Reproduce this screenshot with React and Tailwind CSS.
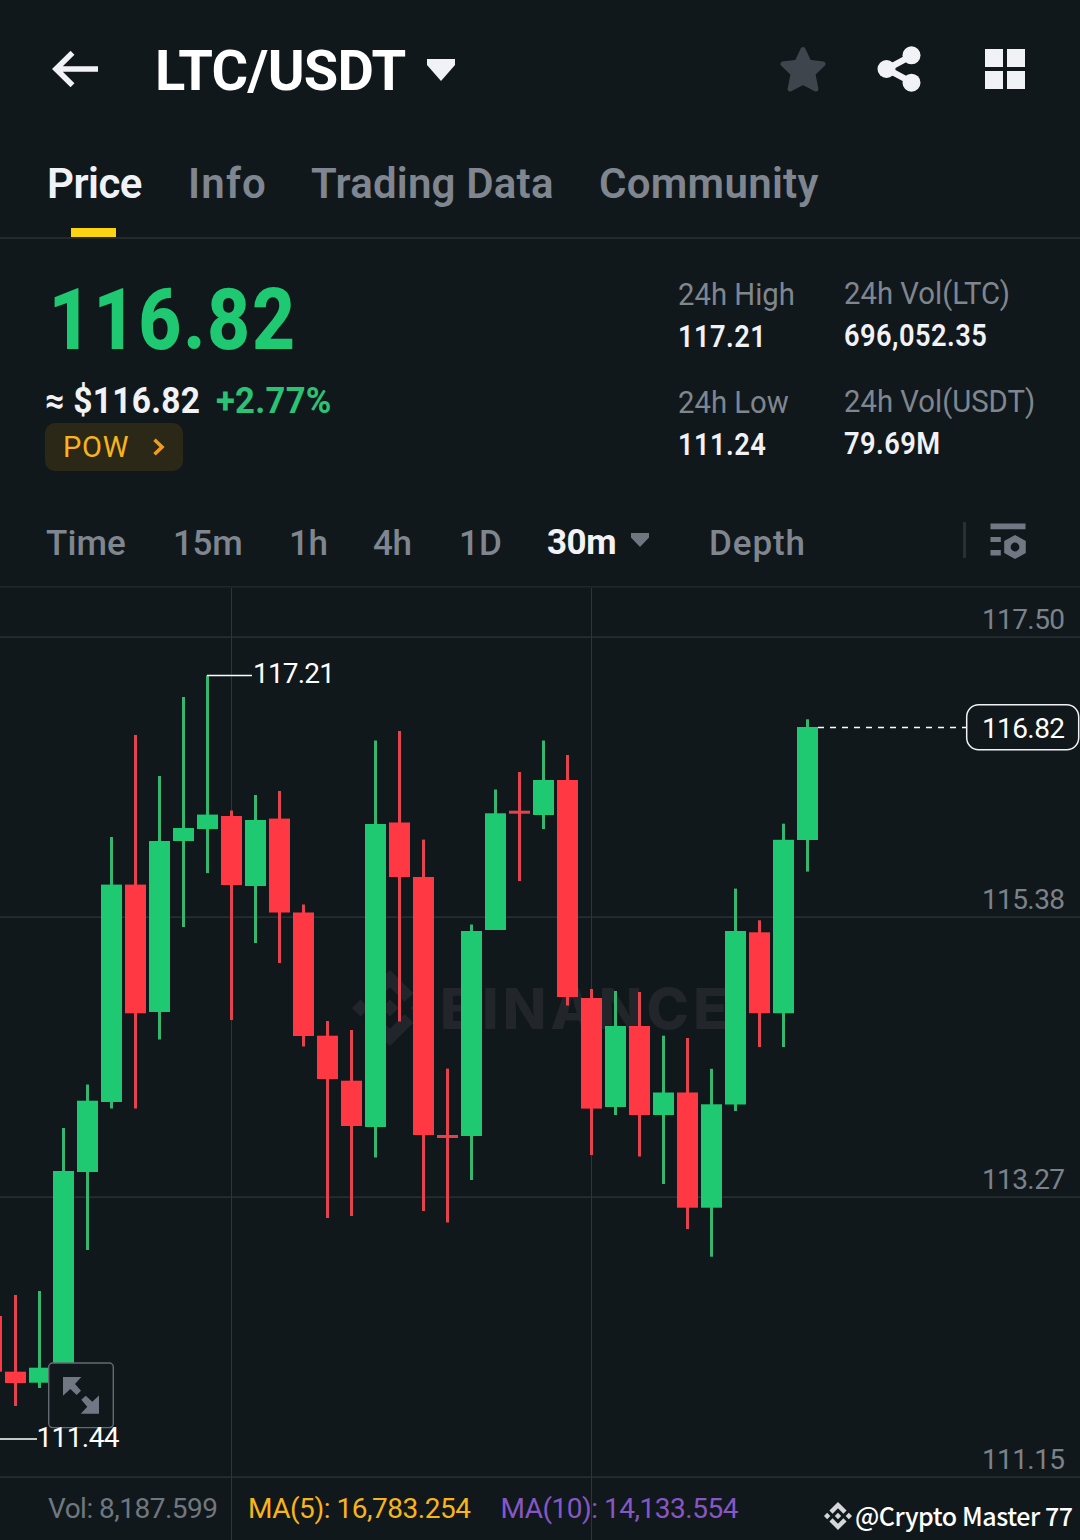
import React from 'react';
import { SiBinance } from 'react-icons/si';

const GREEN = '#1ec971';
const RED = '#ff3844';
const GREEN_WICK = '#35b56f';
const RED_WICK = '#e3434f';

// [high, body top, body bottom, low, up?]
const candles = [
  [1316, 1316, 1371.7, 1371.7, 0],
  [1295, 1371.7, 1383, 1406, 0],
  [1291, 1367.7, 1382.7, 1388, 1],
  [1128, 1171, 1390, 1390, 1],
  [1084.5, 1100.7, 1172, 1250, 1],
  [837, 884.6, 1102, 1108.5, 1],
  [735, 884.6, 1013.3, 1108.5, 0],
  [776, 841, 1012, 1039.5, 1],
  [697, 828, 841, 927, 1],
  [675.5, 814.6, 829, 873, 1],
  [810.5, 816, 885, 1020, 0],
  [795, 820, 886, 943, 1],
  [791, 818.6, 912.5, 963, 0],
  [904.5, 912.5, 1036, 1046.5, 0],
  [1021, 1035.7, 1079, 1218, 0],
  [1030, 1080.7, 1126, 1216, 0],
  [740.5, 824, 1127, 1157.5, 1],
  [731, 822.5, 877, 1021.5, 0],
  [839.6, 877, 1135, 1211, 0],
  [1068.6, 1135, 1138, 1222.5, 0],
  [924.5, 931, 1136, 1180, 1],
  [789.5, 813.3, 930, 930, 1],
  [772, 810.7, 813.7, 881, 0],
  [740.5, 780, 815, 829, 1],
  [755, 780, 997, 1005.5, 0],
  [989, 998, 1108.6, 1155, 0],
  [991, 1026, 1107, 1115, 1],
  [992, 1026, 1115, 1156.5, 0],
  [1035.7, 1092.5, 1115, 1184, 1],
  [1038, 1092.5, 1207.7, 1229, 0],
  [1068.8, 1104.3, 1207.7, 1256.7, 1],
  [888.6, 931, 1104.5, 1111, 1],
  [920.3, 932.3, 1013.2, 1047, 0],
  [823.7, 839.8, 1013.2, 1047, 1],
  [719.3, 727, 840, 871.6, 1],
];

const gridLines = [
  { y: 637, label: '117.50' },
  { y: 917, label: '115.38' },
  { y: 1197, label: '113.27' },
  { y: 1477, label: '111.15' },
];

const Header = () => (
  <header className="flex items-center h-[140px] pt-0.5 pl-[52px] pr-[55px]">
    <svg className="w-[46px] h-[36px] -mt-1" viewBox="0 0 46 36" fill="none" stroke="#f1f2f6" strokeWidth="5.6">
      <path d="M3 18H46M20.5 1.8L4 18l16.500 16.200" />
    </svg>
    <h1 className="ml-[57px] w-[272px] text-[56px] leading-[70px] font-bold tracking-[-0.7px] text-white whitespace-nowrap">
      LTC/USDT
    </h1>
    <svg className="w-7 h-[22px] -mt-0.5" viewBox="0 0 28 22" fill="#f1f2f6">
      <path d="M0 0H28V6L14 22 0 6z" />
    </svg>
    <div className="flex items-center ml-auto -mt-1">
      <svg className="w-[46px] h-[46px]" viewBox="0 0 46 46" fill="#3f454c" stroke="#3f454c" strokeWidth="5" strokeLinejoin="round">
        <path d="M23 3.500l6 12.700 14 1.800-10.100 9.800 3 15.200L23 36.300 10.100 43l3-15.200L3 18l14-1.800z" />
      </svg>
      <svg className="w-[44px] h-[46px] ml-[51px]" viewBox="0 0 44 46" fill="#f1f2f6">
        <path d="M35 9.500L10 23l25 13.500" fill="none" stroke="#f1f2f6" strokeWidth="6.500" />
        <circle cx="34.500" cy="9.300" r="9" />
        <circle cx="9.500" cy="23" r="9" />
        <circle cx="34.500" cy="36.700" r="9" />
      </svg>
      <div className="grid grid-cols-2 gap-1 w-10 ml-[64px]">
        <span className="h-[18px] bg-[#f1f2f6]" />
        <span className="h-[18px] bg-[#f1f2f6]" />
        <span className="h-[18px] bg-[#f1f2f6]" />
        <span className="h-[18px] bg-[#f1f2f6]" />
      </div>
    </div>
  </header>
);

const Tabs = () => (
  <nav className="flex h-[99px] pl-[47px] border-b-2 border-[#23292d] text-[42px] leading-[88px] font-semibold text-[#7f868f] whitespace-nowrap">
    <div className="w-[141px] text-[#f1f2f6]">
      <div className="tracking-[-0.5px]">Price</div>
      <div className="w-[45px] h-[9px] ml-6 bg-[#fcd311]" />
    </div>
    <span className="w-[123px] tracking-[1.2px]">Info</span>
    <span className="w-[288px] tracking-[0.2px]">Trading Data</span>
    <span className="tracking-[0.3px]">Community</span>
  </nav>
);

const Stat = ({ label, value }) => (
  <div className="text-[31px] leading-[42px] whitespace-nowrap">
    <div className="origin-left scale-x-[0.945] text-[#7f868f]">{label}</div>
    <div className="origin-left scale-x-[0.88] tracking-[0.5px] font-semibold text-[#f1f2f6]">{value}</div>
  </div>
);

const Summary = () => (
  <section className="flex h-[261px] pt-[33px] pl-[45px]">
    <div className="w-[633px]">
      <div className="pl-1 text-[86px] leading-[96px] font-extrabold origin-left scale-x-[0.87] tracking-[2px] text-[#1ec971]">
        116.82
      </div>
      <div className="flex mt-[10px] text-[36px] leading-[46px] font-bold whitespace-nowrap">
        <span className="w-[171px] origin-left scale-x-[0.93] tracking-[0.3px] text-[#f1f2f6]">≈ $116.82</span>
        <span className="origin-left scale-x-[0.96] tracking-[0.3px] text-[#2bc275]">+2.77%</span>
      </div>
      <div className="flex items-center w-[138px] h-12 -mt-px pt-px pl-[18px] rounded-[10px] bg-[#2b2818] text-[29px] text-[#f8b41b]">
        <span className="w-[90px] pt-px tracking-[0.8px]">POW</span>
        <svg className="w-3 h-[18px] -mt-px" viewBox="0 0 12 18" fill="none" stroke="#f09c1c" strokeWidth="3.600">
          <path d="M1.500 1.800L9 9l-7.500 7.200" />
        </svg>
      </div>
    </div>
    <div className="w-[166px] pt-0.5 space-y-6">
      <Stat label="24h High" value="117.21" />
      <Stat label="24h Low" value="111.24" />
    </div>
    <div className="pt-px space-y-6">
      <Stat label="24h Vol(LTC)" value="696,052.35" />
      <Stat label="24h Vol(USDT)" value="79.69M" />
    </div>
  </section>
);

const Intervals = () => (
  <div className="flex items-center h-[86px] pl-[46px] text-[35px] font-medium text-[#7f868f] whitespace-nowrap">
    <span className="w-[127px] pt-0.5 tracking-[0.1px]">Time</span>
    <span className="w-[116px] pt-0.5 tracking-[-0.3px]">15m</span>
    <span className="w-[84px] pt-0.5 tracking-[-0.3px]">1h</span>
    <span className="w-[86px] pt-0.5 tracking-[-0.3px]">4h</span>
    <span className="w-[88px] pt-0.5">1D</span>
    <span className="w-[84px] pt-px font-bold tracking-[-0.5px] text-[#f1f2f6]">30m</span>
    <svg className="w-[18px] h-[14px] -mt-1.5" viewBox="0 0 18 14" fill="#6f7680">
      <path d="M0 0H18V4.500L9 14 0 4.500z" />
    </svg>
    <span className="w-[254px] pt-0.5 ml-[60px] tracking-[0.9px]">Depth</span>
    <span className="w-[3px] h-9 -mt-1.5 bg-[#2a2f34]" />
    <svg className="w-9 h-[37px] ml-6 -mt-1" viewBox="990 523 36 37" fill="#717883">
      <path d="M990.500 523.500h35v5.700h-35zM990.500 537h10.300v5h-10.300zM990.500 550h10.300v5.500h-10.300z" />
      <path fillRule="evenodd" d="M1015 535l10.800 6v12l-10.800 6-10.800-6v-12zM1015 542.600a4.400 4.400 0 1 0 0 8.800 4.400 4.400 0 1 0 0-8.800z" />
    </svg>
  </div>
);

const Chart = () => (
  <svg className="block w-[1080px] h-[954px]" viewBox="0 586 1080 954" fontSize="28">
    {/* grid */}
    <rect x="0" y="585.500" width="1080" height="2" fill="#22272b" />
    <rect x="231" y="588" width="1" height="952" fill="#2f3439" />
    <rect x="591" y="588" width="1" height="952" fill="#2f3439" />
    {gridLines.map((line) => (
      <g key={line.y}>
        <rect x="0" y={line.y - 0.5} width="1080" height="1.300" fill="#2f3439" />
        <text x="982" y={line.y - 8} textLength="83" fill="#7b828a">{line.label}</text>
      </g>
    ))}

    {/* watermark */}
    <SiBinance x="352" y="970" size={76} color="#22262a" />
    <text x="440" y="1029" textLength="288" fill="#22262a" className="font-['Inter'] text-[57px] font-extrabold">BINANCE</text>

    {/* candles */}
    {candles.map(([high, top, bottom, low, up], i) => {
      const x = i * 24 - 8.5;
      const doji = bottom - top < 4;
      return (
        <g key={i}>
          <rect x={x - 1.5} y={high} width="3" height={low - high} fill={up ? GREEN_WICK : RED_WICK} />
          <rect x={x - 10.5} y={top} width="21" height={bottom - top} fill={up ? GREEN : doji ? RED_WICK : RED} />
        </g>
      );
    })}

    {/* high and low marks */}
    <path d="M207 675.500H252M0 1439H37" stroke="#fff" strokeWidth="1.500" />
    <text x="253" y="683" textLength="82" fill="#fff">117.21</text>

    {/* last price */}
    <path d="M818 727.500H966" stroke="#fff" strokeWidth="1.500" strokeDasharray="6 6" />
    <rect x="966.700" y="704.700" width="112" height="45" rx="12" fill="#11181c" stroke="#f1f2f6" strokeWidth="1.500" />
    <text x="982" y="738" textLength="83" fill="#fff">116.82</text>

    {/* expand button */}
    <rect x="48.700" y="1363" width="64.600" height="64.600" rx="4" fill="#11181c" stroke="#646a72" strokeWidth="1.400" />
    <path
      d="M63 1377h18.300l-6.300 7 6 6.700-4.300 4.300-6.400-6-7.300 6.700zM99 1413.700H80.700l6.600-7-6-7 4.400-4 6.600 6 6.700-6.300z"
      fill="#717883"
    />
    <text x="36.500" y="1447" textLength="83" fill="#fff">111.44</text>

    {/* volume legend */}
    <text x="48" y="1518" textLength="170" fill="#70777f">Vol: 8,187.599</text>
    <text x="248" y="1518" textLength="223" fill="#f8b41b">MA(5): 16,783.254</text>
    <text x="500.500" y="1518" textLength="238" fill="#8657c4">MA(10): 14,133.554</text>

    <SiBinance x="824" y="1502" size={28} color="#d4d6d8" />
    <text x="855" y="1525.500" textLength="218" fill="#fff" className="font-['Noto_Sans_CJK_SC',sans-serif] text-[25px] font-medium">
      @Crypto Master 77
    </text>
  </svg>
);

export default function App() {
  return (
    <div className="w-[1080px] h-[1540px] overflow-hidden bg-[#11181c] font-['Roboto',sans-serif]">
      <Header />
      <Tabs />
      <Summary />
      <Intervals />
      <Chart />
    </div>
  );
}
